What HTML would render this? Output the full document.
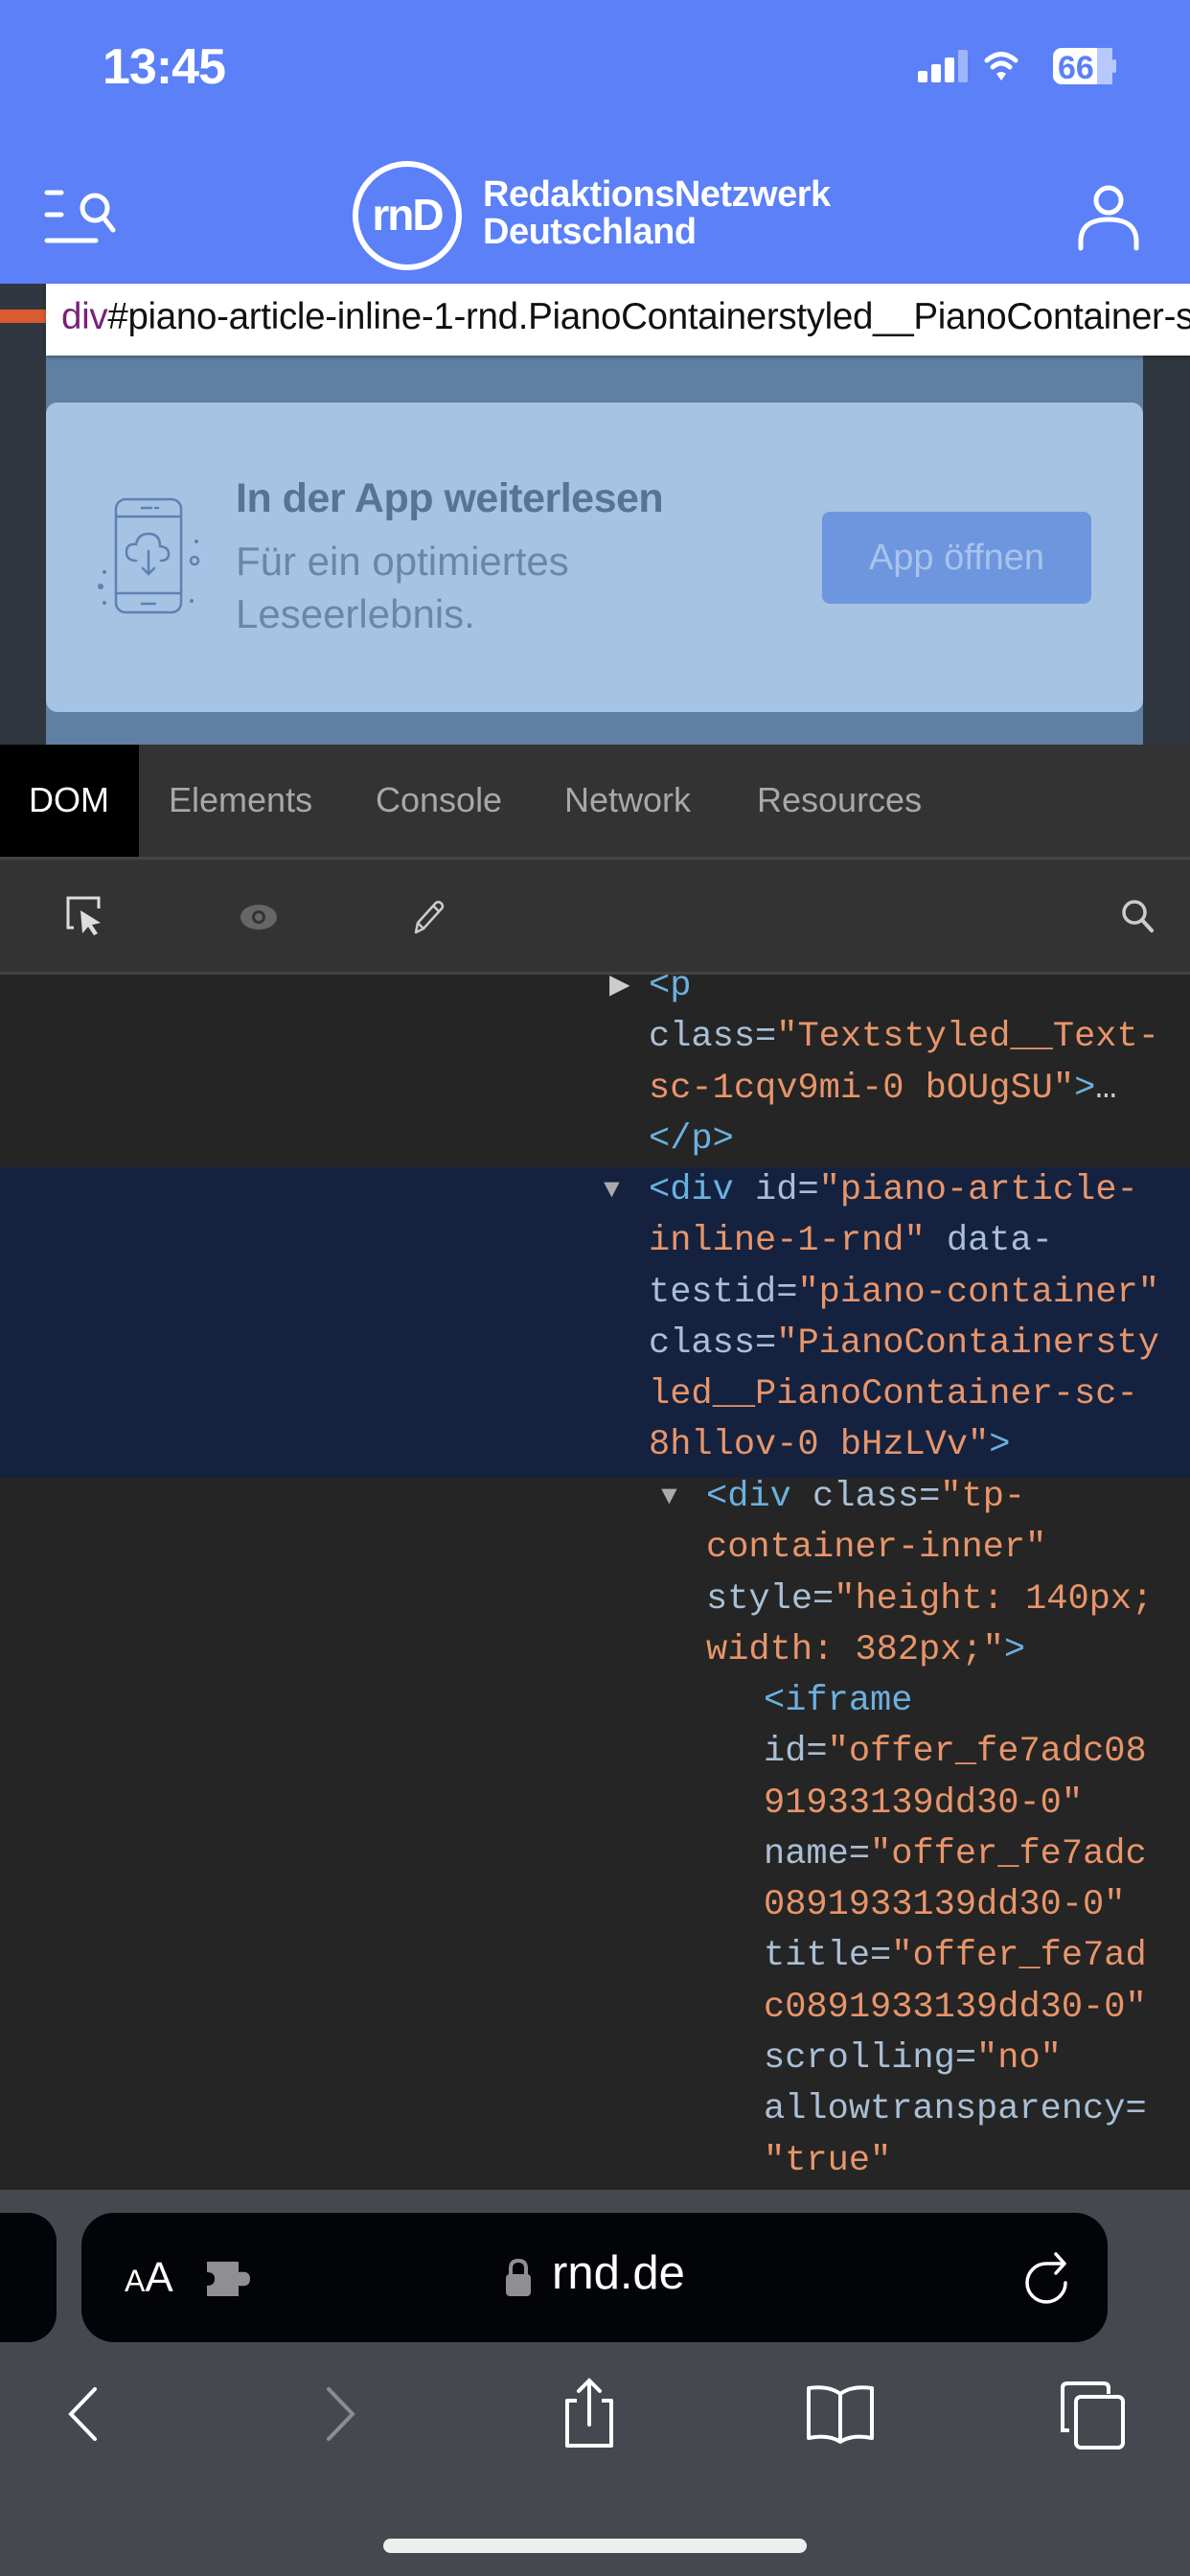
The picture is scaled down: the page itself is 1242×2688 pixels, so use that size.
<!DOCTYPE html>
<html><head><meta charset="utf-8">
<style>
*{margin:0;padding:0;box-sizing:border-box}
body{width:1242px;height:2688px;position:relative;overflow:hidden;background:#2f3640;font-family:"Liberation Sans",sans-serif}
.a{position:absolute}
.code{position:absolute;left:0;width:1242px;font-family:"Liberation Mono",monospace;font-size:37px;line-height:53.3px;white-space:pre;}
.t{color:#6cb0e0}.n{color:#a9bfd6}.v{color:#e8956a}
.tab{position:absolute;top:807px;font-size:36px;color:#a8a8a8;line-height:56px}
</style></head><body>
<!-- header -->
<div class="a" style="left:0;top:0;width:1242px;height:296px;background:#5b80f7"></div>
<div class="a" style="left:107px;top:40px;font-size:52px;color:#fff;font-weight:bold;letter-spacing:-1px">13:45</div>
<svg class="a" style="left:955px;top:50px" width="220" height="40" viewBox="0 0 220 40">
 <rect x="3" y="24" width="10" height="12" rx="2" fill="#fff"/>
 <rect x="17" y="17" width="10" height="19" rx="2" fill="#fff"/>
 <rect x="31" y="10" width="10" height="26" rx="2" fill="#fff"/>
 <rect x="45" y="2" width="10" height="34" rx="2" fill="#9fb5f9"/>
 <path d="M75 13 Q90 0 105 13" stroke="#fff" stroke-width="5" fill="none" stroke-linecap="round"/>
 <path d="M81 20 Q90 12 99 20" stroke="#fff" stroke-width="5" fill="none" stroke-linecap="round"/>
 <path d="M85 27 L90 34 L95 27 Q90 23 85 27Z" fill="#fff"/>
 <rect x="144" y="0" width="62" height="38" rx="9" fill="#fff"/>
 <rect x="190" y="0" width="16" height="38" fill="#b7c8fb"/>
 <rect x="206" y="12" width="4" height="14" rx="2" fill="#b7c8fb"/>
 <text x="149" y="32" font-family="Liberation Sans" font-weight="bold" font-size="34" fill="#5b80f7">66</text>
</svg>
<svg class="a" style="left:46px;top:196px" width="76" height="62" viewBox="0 0 76 62">
 <path d="M3 5H18M3 28H18M3 55H54" stroke="#fff" stroke-width="5" stroke-linecap="round"/>
 <circle cx="53" cy="21" r="13" stroke="#fff" stroke-width="5" fill="none"/>
 <path d="M62 31L72 44" stroke="#fff" stroke-width="5" stroke-linecap="round"/>
</svg>
<svg class="a" style="left:367px;top:167px" width="116" height="116" viewBox="0 0 116 116">
 <circle cx="58" cy="58" r="54" stroke="#fff" stroke-width="6" fill="none"/>
 <text x="58" y="73" text-anchor="middle" font-family="Liberation Sans" font-weight="bold" font-size="46" fill="#fff" letter-spacing="-2">rnD</text>
</svg>
<div class="a" style="left:504px;top:184px;font-size:38px;line-height:39px;color:#fff;font-weight:bold;letter-spacing:-0.5px">RedaktionsNetzwerk<br>Deutschland</div>
<svg class="a" style="left:1124px;top:192px" width="66" height="70" viewBox="0 0 66 70">
 <circle cx="33" cy="17" r="13" stroke="#fff" stroke-width="5" fill="none"/>
 <path d="M4 67 V60 Q4 37 33 37 Q62 37 62 60 V67" stroke="#fff" stroke-width="5" fill="none" stroke-linecap="round"/>
</svg>
<!-- path bar -->
<div class="a" style="left:0;top:323px;width:48px;height:14px;background:#d95b2f"></div>
<div class="a" style="left:48px;top:371px;width:1145px;height:406px;background:#5f7fa3"></div>
<div class="a" style="left:48px;top:296px;width:1194px;height:75px;background:#fff;box-shadow:0 2px 4px rgba(0,0,0,.3)"></div>
<div class="a" style="left:64px;top:308px;font-size:38.5px;line-height:46px;color:#111;white-space:nowrap;letter-spacing:-0.3px"><span style="color:#7a1f7a">div</span>#piano-article-inline-1-rnd.PianoContainerstyled__PianoContainer-sc</div>
<!-- card -->
<div class="a" style="left:48px;top:420px;width:1145px;height:323px;background:#a7c3e4;border-radius:12px"></div>
<svg class="a" style="left:100px;top:515px" width="115" height="130" viewBox="0 0 115 130">
 <g stroke="#5f80b2" stroke-width="2.5" fill="none" stroke-linecap="round">
 <rect x="21" y="6" width="68" height="118" rx="10"/>
 <path d="M21 24H89M21 104H89M48 15H58M62 15H65M48 115H62"/>
 <path d="M42 70 Q32 70 32 61 Q32 52 42 53 Q44 42 55 42 Q67 42 67 55 Q76 56 76 63 Q76 70 68 70"/>
 <path d="M55 60V84M49 78L55 84L61 78"/>
 <circle cx="103" cy="70" r="4"/></g>
 <g fill="#5f80b2"><circle cx="105" cy="50" r="2"/><circle cx="9" cy="82" r="2"/><circle cx="9" cy="114" r="2"/><circle cx="100" cy="112" r="2"/><circle cx="5" cy="97" r="3"/></g>
</svg>
<div class="a" style="left:246px;top:496px;font-size:43px;font-weight:bold;color:#587394;letter-spacing:-0.5px">In der App weiterlesen</div>
<div class="a" style="left:246px;top:558px;font-size:42px;line-height:55px;color:#6a86a8">Für ein optimiertes<br>Leseerlebnis.</div>
<div class="a" style="left:858px;top:534px;width:281px;height:96px;background:#6e96df;border-radius:8px;color:#a8c3ec;font-size:38px;text-align:center;line-height:96px">App öffnen</div>
<!-- devtools tabs -->
<div class="a" style="left:0;top:777px;width:1242px;height:117px;background:#333"></div>
<div class="a" style="left:0;top:777px;width:145px;height:117px;background:#000"></div>
<div class="tab" style="left:30px;color:#fff">DOM</div>
<div class="tab" style="left:176px">Elements</div>
<div class="tab" style="left:392px">Console</div>
<div class="tab" style="left:589px">Network</div>
<div class="tab" style="left:790px">Resources</div>
<div class="a" style="left:0;top:894px;width:1242px;height:3px;background:#444"></div>
<div class="a" style="left:0;top:897px;width:1242px;height:117px;background:#333"></div>
<svg class="a" style="left:66px;top:934px" width="46" height="46" viewBox="0 0 46 46">
 <path d="M20 3H5V34H11" stroke="#ddd" stroke-width="3" fill="none"/>
 <path d="M20 3H37V14" stroke="#ddd" stroke-width="3" fill="none"/>
 <path d="M18 16L20 40L26 33L32 42L36 40L30 31L39 29Z" fill="#ddd"/>
</svg>
<svg class="a" style="left:248px;top:942px" width="44" height="30" viewBox="0 0 44 30"><ellipse cx="22" cy="15" rx="19" ry="13" fill="#666"/><circle cx="22" cy="15" r="7" fill="#333"/><circle cx="22" cy="15" r="4" fill="#666"/></svg>
<svg class="a" style="left:428px;top:937px" width="40" height="40" viewBox="0 0 40 40"><path d="M6 36L8 26L27 5Q30 3 33 6Q35 9 33 11L14 32Z M8 26L14 32 M24 8L30 14" stroke="#ccc" stroke-width="2.5" fill="none" stroke-linejoin="round"/></svg>
<svg class="a" style="left:1168px;top:936px" width="40" height="40" viewBox="0 0 40 40"><circle cx="16" cy="16" r="11" stroke="#ccc" stroke-width="3.5" fill="none"/><path d="M24 24L34 35" stroke="#ccc" stroke-width="4" stroke-linecap="round"/></svg>
<div class="a" style="left:0;top:1014px;width:1242px;height:3px;background:#444"></div>
<!-- code -->
<div class="a" style="left:0;top:1017px;width:1242px;height:1268px;background:#252525;overflow:hidden">
 <div class="a" style="left:0;top:201px;width:1242px;height:324px;background:#14223f"></div>
 <div class="code" style="top:-14px"><span style="position:absolute;left:636px;color:#ccc;font-size:28px">▶</span><span style="position:absolute;left:677px"><span class="t">&lt;p</span>
<span class="n">class=</span><span class="v">"Textstyled__Text-</span>
<span class="v">sc-1cqv9mi-0 bOUgSU"</span><span class="t">&gt;</span><span style="color:#ccc">…</span>
<span class="t">&lt;/p&gt;</span></span></div>
 <div class="code" style="top:199px"><span style="position:absolute;left:630px;color:#aaa;font-size:28px">▼</span><span style="position:absolute;left:677px"><span class="t">&lt;div</span> <span class="n">id=</span><span class="v">"piano-article-</span>
<span class="v">inline-1-rnd"</span> <span class="n">data-</span>
<span class="n">testid=</span><span class="v">"piano-container"</span>
<span class="n">class=</span><span class="v">"PianoContainersty</span>
<span class="v">led__PianoContainer-sc-</span>
<span class="v">8hllov-0 bHzLVv"</span><span class="t">&gt;</span></span></div>
 <div class="code" style="top:519px"><span style="position:absolute;left:690px;color:#aaa;font-size:28px">▼</span><span style="position:absolute;left:737px"><span class="t">&lt;div</span> <span class="n">class=</span><span class="v">"tp-</span>
<span class="v">container-inner"</span>
<span class="n">style=</span><span class="v">"height: 140px;</span>
<span class="v">width: 382px;"</span><span class="t">&gt;</span></span></div>
 <div class="code" style="top:732px"><span style="position:absolute;left:797px"><span class="t">&lt;iframe</span>
<span class="n">id=</span><span class="v">"offer_fe7adc08</span>
<span class="v">91933139dd30-0"</span>
<span class="n">name=</span><span class="v">"offer_fe7adc</span>
<span class="v">0891933139dd30-0"</span>
<span class="n">title=</span><span class="v">"offer_fe7ad</span>
<span class="v">c0891933139dd30-0"</span>
<span class="n">scrolling=</span><span class="v">"no"</span>
<span class="n">allowtransparency=</span>
<span class="v">"true"</span></span></div>
</div>
<!-- bottom chrome -->
<div class="a" style="left:0;top:2285px;width:1242px;height:403px;background:#45494f"></div>
<div class="a" style="left:-40px;top:2309px;width:99px;height:135px;background:#020407;border-radius:30px"></div>
<div class="a" style="left:85px;top:2309px;width:1071px;height:135px;background:#020407;border-radius:34px"></div>
<div class="a" style="left:130px;top:2352px;color:#fff;white-space:nowrap"><span style="font-size:32px">A</span><span style="font-size:44px">A</span></div>
<svg class="a" style="left:214px;top:2358px" width="50" height="40" viewBox="0 0 50 40"><path d="M2 2H35V13Q47 11 47 20Q47 29 35 27V38H2V27Q10 27 10 20Q10 13 2 13Z" fill="#8e8e93"/></svg>
<svg class="a" style="left:526px;top:2356px" width="30" height="42" viewBox="0 0 30 42"><path d="M7 18V11Q7 3 15 3Q23 3 23 11V18" stroke="#8e8e93" stroke-width="4" fill="none"/><rect x="2" y="17" width="26" height="23" rx="4" fill="#8e8e93"/></svg>
<div class="a" style="left:576px;top:2344px;font-size:49px;color:#fff">rnd.de</div>
<svg class="a" style="left:1064px;top:2340px" width="60" height="70" viewBox="0 0 60 70"><path d="M46 22 H28 A20 20 0 1 0 48 42" stroke="#fff" stroke-width="3.5" fill="none" stroke-linecap="round"/><path d="M38 12 L47 22 L38 32" stroke="#fff" stroke-width="3.5" fill="none" stroke-linecap="round" stroke-linejoin="round"/></svg>
<svg class="a" style="left:66px;top:2488px" width="40" height="62" viewBox="0 0 40 62"><path d="M33 5L8 31L33 57" stroke="#fff" stroke-width="4" fill="none" stroke-linecap="round"/></svg>
<svg class="a" style="left:336px;top:2488px" width="40" height="62" viewBox="0 0 40 62"><path d="M7 5L32 31L7 57" stroke="#8a8d92" stroke-width="4" fill="none" stroke-linecap="round"/></svg>
<svg class="a" style="left:582px;top:2480px" width="66" height="76" viewBox="0 0 66 76"><path d="M20 25H10V72H56V25H46" stroke="#fff" stroke-width="4" fill="none" stroke-linejoin="round"/><path d="M33 4V50M22 15L33 4L44 15" stroke="#fff" stroke-width="4" fill="none" stroke-linecap="round"/></svg>
<svg class="a" style="left:838px;top:2486px" width="78" height="66" viewBox="0 0 78 66"><path d="M39 12Q27 3 6 6V58Q27 54 39 62Q51 54 72 58V6Q51 3 39 12Z M39 12V62" stroke="#fff" stroke-width="4" fill="none" stroke-linejoin="round"/></svg>
<svg class="a" style="left:1102px;top:2482px" width="76" height="76" viewBox="0 0 76 76"><path d="M14 54H7V10Q7 5 12 5H50Q55 5 55 10V16" stroke="#fff" stroke-width="4" fill="none"/><rect x="21" y="19" width="49" height="53" rx="5" stroke="#fff" stroke-width="4" fill="none"/></svg>
<div class="a" style="left:400px;top:2649px;width:442px;height:15px;background:#eee;border-radius:8px"></div>
</body></html>
